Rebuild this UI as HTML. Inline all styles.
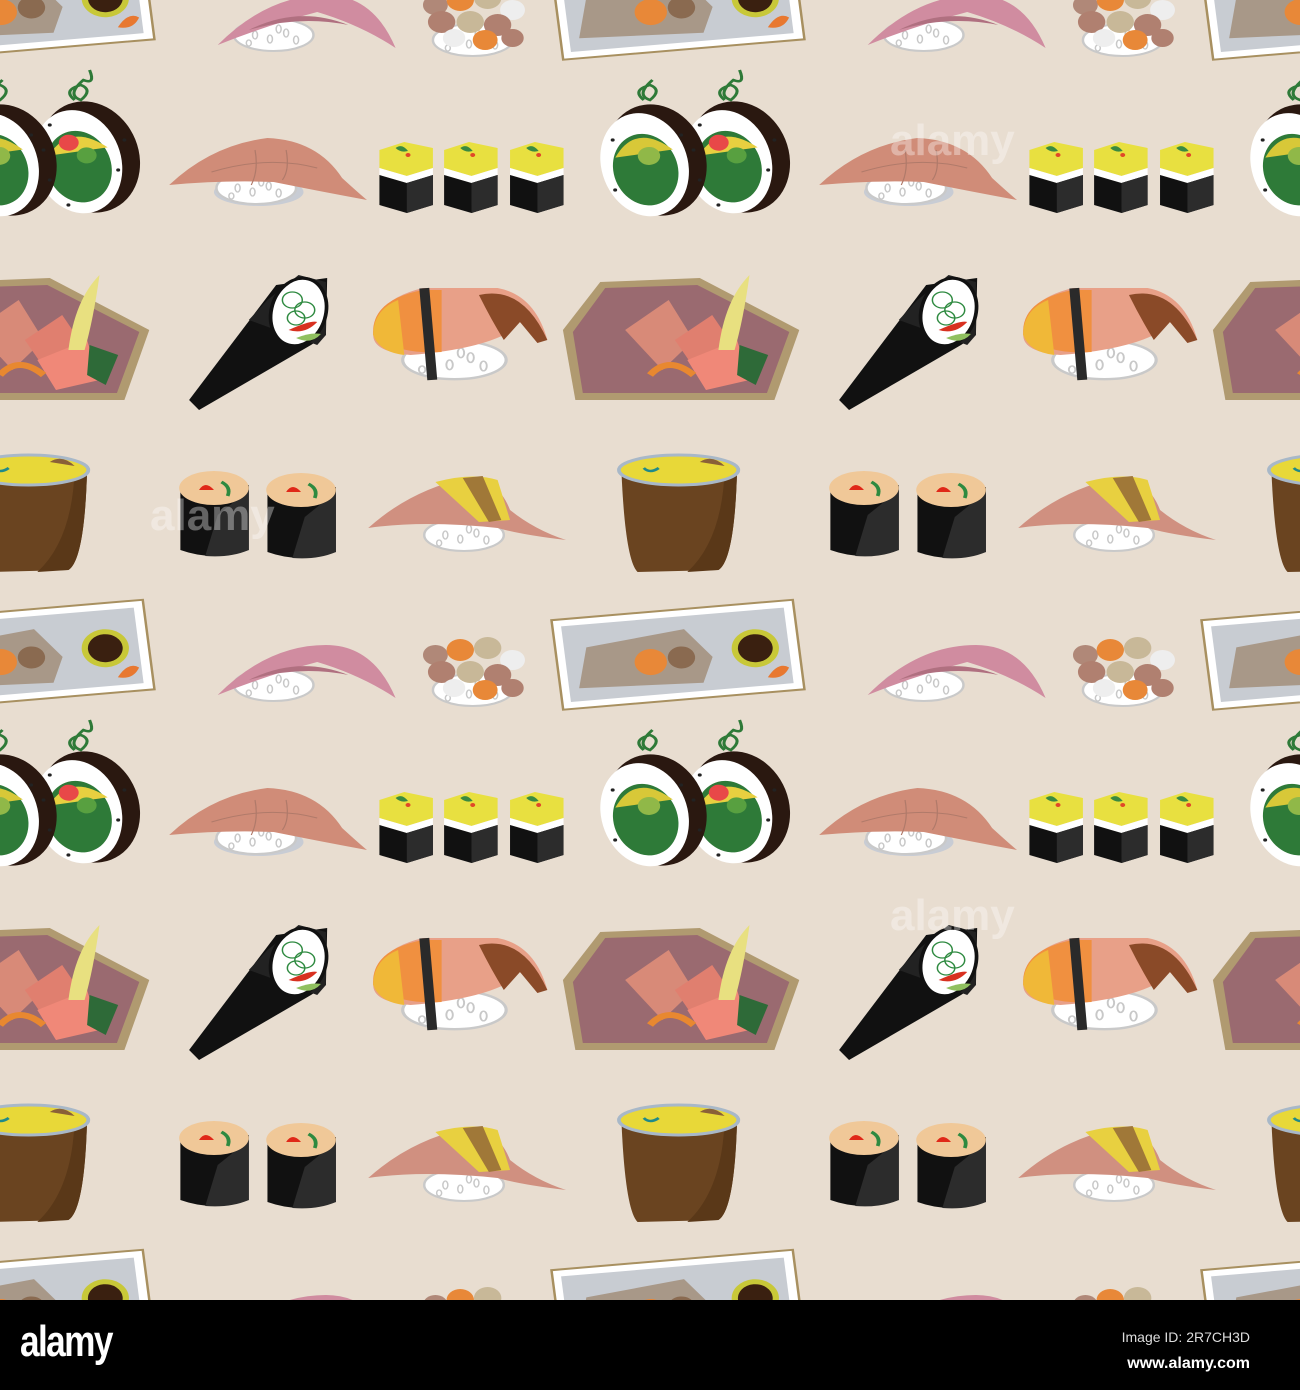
<!DOCTYPE html>
<html><head><meta charset="utf-8"><style>
html,body{margin:0;padding:0;background:#e8ddd0;width:1300px;height:1390px;overflow:hidden}
.wrap{position:relative;width:1300px;height:1390px;overflow:hidden}
svg{position:absolute;left:0;top:0}
.bar{position:absolute;left:0;top:1300px;width:1300px;height:90px;background:#000}
.logo{position:absolute;left:20px;top:17px;color:#fff;font:bold 44px "Liberation Sans Narrow","Liberation Sans",sans-serif;letter-spacing:-2px;transform:scaleX(.8);transform-origin:left}
.id{position:absolute;right:50px;top:24px;color:#ddd;font:14px "Liberation Sans",sans-serif;text-align:right;line-height:26px}
.id b{color:#fff;font-size:16px}
</style></head><body><div class="wrap">
<svg width="1300" height="1300" viewBox="0 0 1300 1300">
<defs>
<g id="rice">
<ellipse cx="0" cy="0" rx="32" ry="16" fill="#fff" stroke="#c9c9c9" stroke-width="2"/>
<g fill="none" stroke="#c8c8c8" stroke-width="1.2"><ellipse cx="-15" cy="0" rx="2" ry="4"/><ellipse cx="-3" cy="4" rx="2" ry="4"/><ellipse cx="10" cy="-2" rx="2" ry="4"/><ellipse cx="18" cy="5" rx="2" ry="4"/><ellipse cx="4" cy="-6" rx="2" ry="4"/><ellipse cx="-20" cy="8" rx="2" ry="3"/></g>
</g>
<g id="tile"><g transform="scale(1.244 1)">
<!-- Row A -->
<g transform="rotate(-6 20 5)">
<rect x="-75" y="-40" width="195" height="90" fill="#fff" stroke="#a89060" stroke-width="2"/>
<rect x="-68" y="-33" width="180" height="76" fill="#c8ccd2"/>
<path d="M-60 30 L-50 -10 L30 -20 L50 10 L40 35 Z" fill="#a89888"/>
<circle cx="0" cy="10" r="13" fill="#e88838"/><circle cx="25" cy="8" r="11" fill="#8a6a50"/>
<circle cx="85" cy="5" r="19" fill="#c8c838"/><circle cx="85" cy="5" r="14" fill="#3a2010"/>
<path d="M92 35 q10 -15 18 -8 q-6 12 -18 8z" fill="#e87830"/>
</g>
<use href="#rice" x="220" y="35"/>
<path d="M175 45 Q215 -5 262 -5 Q300 -5 318 48 Q290 25 255 12 Q215 25 175 45Z" fill="#d08ca0"/>
<path d="M200 30 Q240 5 280 25 Q240 15 200 30Z" fill="#b07080"/>
<use href="#rice" x="380" y="40"/>
<g><circle cx="350" cy="5" r="10" fill="#b08878"/><circle cx="370" cy="0" r="11" fill="#e88838"/><circle cx="392" cy="-2" r="11" fill="#c8b898"/><circle cx="412" cy="10" r="10" fill="#eeeeee"/><circle cx="355" cy="22" r="11" fill="#b08070"/><circle cx="378" cy="22" r="11" fill="#c8b898"/><circle cx="400" cy="25" r="11" fill="#b08070"/><circle cx="390" cy="40" r="10" fill="#e88838"/><circle cx="365" cy="38" r="9" fill="#eeeeee"/><circle cx="412" cy="38" r="9" fill="#b08070"/></g>
<!-- Row B futomaki -->
<g transform="rotate(-10 72 157)"><ellipse cx="72" cy="157" rx="40" ry="56" fill="#2a1810"/><ellipse cx="62" cy="160" rx="35" ry="52" fill="#fff"/><ellipse cx="62" cy="165" rx="26" ry="36" fill="#2e7a38"/><path d="M40 150 Q62 120 88 150Z" fill="#e8d040"/><circle cx="58" cy="140" r="8" fill="#e84848"/><circle cx="70" cy="155" r="8" fill="#58a040"/></g>
<g transform="rotate(-10 5 160)"><ellipse cx="5" cy="160" rx="40" ry="56" fill="#2a1810"/><ellipse cx="-5" cy="163" rx="35" ry="52" fill="#fff"/><ellipse cx="-5" cy="168" rx="26" ry="36" fill="#2e7a38"/><path d="M-27 152 Q-5 120 20 152Z" fill="#d8c838"/><circle cx="0" cy="155" r="9" fill="#90b848"/></g>
<g fill="#222"><circle cx="40" cy="125" r="1.6"/><circle cx="35" cy="150" r="1.6"/><circle cx="40" cy="180" r="1.6"/><circle cx="55" cy="205" r="1.6"/><circle cx="95" cy="170" r="1.6"/><circle cx="100" cy="140" r="1.6"/><circle cx="-30" cy="140" r="1.6"/><circle cx="-28" cy="190" r="1.6"/><circle cx="25" cy="135" r="1.6"/></g>
<path d="M60 100 q-10 -10 5 -15 q10 5 0 15 q-12 -5 2 -20 q10 5 5 -10" fill="none" stroke="#2e7a38" stroke-width="2.5"/>
<path d="M-5 100 q-10 -10 5 -15 q10 5 0 15 q-12 -5 2 -20" fill="none" stroke="#2e7a38" stroke-width="2.5"/>
<!-- Row B nigiri -->
<ellipse cx="208" cy="192" rx="36" ry="14" fill="#c8ccd4"/><use href="#rice" x="206" y="188"/>
<path d="M136 185 Q170 145 215 138 Q255 140 275 178 Q290 195 295 200 Q260 192 220 182 Q180 180 136 185Z" fill="#d08c78"/>
<g stroke="#b07a6a" fill="none" stroke-width="1"><path d="M170 172 Q215 155 255 168"/><path d="M205 150 q3 20 -3 35"/><path d="M230 150 q3 20 -3 30"/></g>
<!-- cubes -->
<g id="cube"><path d="M305 150 L325 142 L348 148 L348 168 L327 176 L305 168Z" fill="#e8e040"/><path d="M305 168 L327 176 L348 168 L348 175 L327 183 L305 175Z" fill="#fff"/><path d="M305 175 L327 183 L348 175 L348 205 L327 213 L305 205Z" fill="#111"/><path d="M327 183 L348 175 L348 205 L327 213Z" fill="#2c2c2c"/><circle cx="328" cy="155" r="2" fill="#e04828"/><path d="M318 148 q5 -5 10 3 q-6 2 -10 -3z" fill="#3a8a40"/></g>
<use href="#cube" x="52"/><use href="#cube" x="105"/>
<!-- Row C sashimi plate -->
<path d="M-70 330 L-40 282 L40 278 L120 330 L100 400 L-60 400Z" fill="#b09a70"/>
<path d="M-62 332 L-36 288 L38 285 L112 332 L94 393 L-54 393Z" fill="#9a6a70"/>
<path d="M-20 330 L15 300 L35 340 L10 370Z" fill="#d88a78"/><path d="M20 340 L50 315 L72 355 L45 385Z" fill="#e07f6f"/><path d="M30 360 L70 340 L80 380 L45 390Z" fill="#f08878"/>
<path d="M55 350 Q60 300 80 275 Q75 320 68 350Z" fill="#e8e080"/>
<path d="M72 345 L95 355 L85 385 L70 375Z" fill="#2e6a38"/>
<path d="M0 375 Q15 355 35 375" fill="none" stroke="#e88830" stroke-width="6"/>
<!-- temaki -->
<path d="M222 285 L263 278 L262 335 L250 345 L160 410 L152 400 Z" fill="#111"/>
<path d="M215 300 L240 275 L262 282 L262 335 L255 345 L200 320Z" fill="#222"/>
<ellipse cx="240" cy="312" rx="22" ry="34" transform="rotate(10 240 312)" fill="#fff" stroke="#111" stroke-width="3"/>
<g fill="none" stroke="#2e8a40" stroke-width="1.2"><circle cx="235" cy="300" r="8"/><circle cx="245" cy="310" r="8"/><circle cx="238" cy="318" r="7"/></g>
<path d="M232 330 Q250 320 255 322 Q245 335 232 330Z" fill="#d83020"/><path d="M238 338 Q250 332 258 334 Q250 345 238 338Z" fill="#90c060"/>
<!-- shrimp nigiri -->
<use href="#rice" x="365" y="360" transform="scale(1.3 1.2) translate(-84 -60)"/>
<path d="M300 335 Q300 300 340 288 L400 288 Q430 295 440 340 L415 320 L405 335 Q380 350 330 355 Q300 352 300 335Z" fill="#e8a088"/>
<path d="M300 335 Q298 300 340 290 L355 290 L355 352 Q320 355 300 335Z" fill="#f09040"/>
<path d="M300 335 Q300 310 320 300 L325 355 Q305 352 300 335Z" fill="#f0b838"/>
<path d="M385 295 Q420 285 440 340 L432 343 L418 322 L405 340 Q395 320 385 295Z" fill="#8a4a28"/>
<rect x="340" y="288" width="8" height="92" fill="#2a2a2a" transform="rotate(-4 345 330)"/>
<!-- Row D cup -->
<path d="M-23 470 L70 470 Q68 560 55 570 L-10 572 Q-20 560 -23 470Z" fill="#6a4420"/>
<path d="M30 572 L55 570 Q68 560 70 470 L60 470 Q58 540 30 572Z" fill="#5a3818"/>
<ellipse cx="23" cy="470" rx="48" ry="15" fill="#e8d838" stroke="#a8b8c8" stroke-width="3"/>
<path d="M40 462 q10 -8 20 4z" fill="#8a6038"/><path d="M-5 468 q5 6 12 0" fill="none" stroke="#208a8a" stroke-width="2.5"/>
<!-- rolls -->
<g id="roll"><path d="M145 485 L200 485 L200 550 Q172 562 145 550Z" fill="#111"/><path d="M175 515 L200 490 L200 550 Q185 558 165 556Z" fill="#2c2c2c"/><ellipse cx="172" cy="488" rx="28" ry="17" fill="#f0c898"/><path d="M160 490 q5 -10 12 0z" fill="#e02818"/><path d="M178 482 q8 5 5 14" fill="none" stroke="#2e8a40" stroke-width="3"/></g>
<use href="#roll" x="70" y="2"/>
<!-- nigiri D -->
<use href="#rice" x="373" y="535"/>
<path d="M296 528 Q330 490 375 478 Q400 478 410 510 Q430 530 455 540 Q420 535 400 528 Q340 520 296 528Z" fill="#d09080"/>
<path d="M350 482 Q380 472 400 480 L410 520 L385 522 Z" fill="#e8d040"/>
<path d="M372 478 L388 476 L403 520 L393 522Z" fill="#a07838"/>
</g></g>
</defs>
<g>
<use href="#tile" x="0" y="0"/><use href="#tile" x="650" y="0"/><use href="#tile" x="1300" y="0"/>
<use href="#tile" x="0" y="650"/><use href="#tile" x="650" y="650"/><use href="#tile" x="1300" y="650"/>
<use href="#tile" x="0" y="1300"/><use href="#tile" x="650" y="1300"/><use href="#tile" x="1300" y="1300"/>
</g>
<g fill="#fff" opacity=".35" font-family="Liberation Sans,sans-serif" font-weight="bold">
<text x="890" y="155" font-size="44">alamy</text>
<text x="890" y="930" font-size="44">alamy</text>
<text x="150" y="530" font-size="44">alamy</text>
</g>
</svg>
<div class="bar"><div class="logo">alamy</div><div class="id">Image ID: 2R7CH3D<br><b>www.alamy.com</b></div></div>
</div></body></html>
